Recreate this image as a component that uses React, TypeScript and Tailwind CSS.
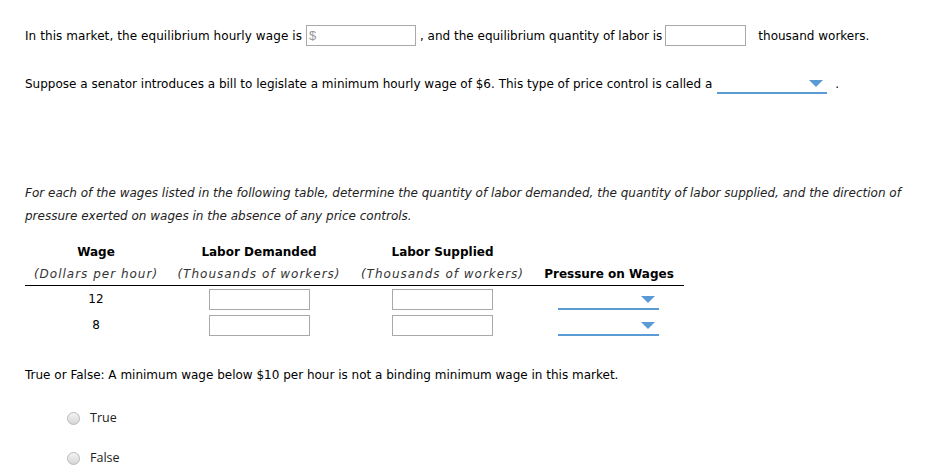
import React from 'react';

const font = { fontFamily: 'Verdana, "DejaVu Sans", sans-serif' };

function TextBox({ w = 'w-[101px]', prefix }: { w?: string; prefix?: string }) {
    return (
        <span className={`inline-flex items-center ${w} h-[21px] border border-[#a9a9a9] bg-white px-[2px] align-middle`}>
            {prefix && <span className="text-[#999] text-[13px] font-['Liberation_Sans',sans-serif]">{prefix}</span>}
        </span>
    );
}

function Dropdown({ w = 'w-[110px]' }: { w?: string }) {
    return (
        <span className={`relative inline-block ${w} h-[21px] border-b-2 border-[#5b9bd5] align-middle`}>
            <span className="absolute right-[4px] top-[7px] w-0 h-0 border-l-[7px] border-r-[7px] border-t-[7px] border-l-transparent border-r-transparent border-t-[#5b9bd5]" />
        </span>
    );
}

function Radio({ label }: { label: string }) {
    return (
        <div className="flex items-center h-[20px] pl-[42px]">
            <span className="w-[13px] h-[13px] rounded-full border border-[#b8b8b8] bg-gradient-to-b from-[#f4f4f4] to-[#d6d6d6]" />
            <span className="ml-[10px] text-[12.5px] text-[#222] font-['Open_Sans',sans-serif]">{label}</span>
        </div>
    );
}

export default function App() {
    const cols = 'grid grid-cols-[142px_184px_183px_150px] w-[659px]';
    const sub = 'h-[22px] leading-[22px] italic text-[#333] tracking-[1px]';
    return (
        <div style={font} className="w-[928px] h-[468px] bg-white text-black text-[12px] pl-[25px] pr-[20px] overflow-hidden">
            <div className="flex items-center h-[21px] mt-[25px] whitespace-nowrap">
                <span className="tracking-[0.08px]">In this market, the equilibrium hourly wage is</span>
                <span className="ml-[4px]"><TextBox w="w-[110px]" prefix="$" /></span>
                <span className="ml-[4px]">, and the equilibrium quantity of labor is</span>
                <span className="ml-[3px]"><TextBox w="w-[81px]" /></span>
                <span className="ml-[12px]">thousand workers.</span>
            </div>

            <div className="flex items-center h-[21px] mt-[27px] whitespace-nowrap">
                <span>Suppose a senator introduces a bill to legislate a minimum hourly wage of $6. This type of price control is called a</span>
                <span className="ml-[5px]"><Dropdown /></span>
                <span className="ml-[8px]">.</span>
            </div>

            <p className="italic leading-[23px] mt-[88px] text-[#222]">
                For each of the wages listed in the following table, determine the quantity of labor demanded, the quantity of labor supplied, and the direction of pressure exerted on wages in the absence of any price controls.
            </p>

            <div className="mt-[13px]">
                <div className={`${cols} text-center border-b border-black`}>
                    <div className="h-[22px] leading-[22px] font-bold">Wage</div>
                    <div className="h-[22px] leading-[22px] font-bold">Labor Demanded</div>
                    <div className="h-[22px] leading-[22px] font-bold">Labor Supplied</div>
                    <div className="h-[22px]" />
                    <div className={sub}>(Dollars per hour)</div>
                    <div className={sub}>(Thousands of workers)</div>
                    <div className={sub}>(Thousands of workers)</div>
                    <div className="h-[22px] leading-[22px] font-bold">Pressure on Wages</div>
                </div>
                {[12, 8].map((wage) => (
                    <div key={wage} className={`${cols} h-[26px] items-center text-center`}>
                        <div>{wage}</div>
                        <div className="flex justify-center"><TextBox /></div>
                        <div className="flex justify-center"><TextBox /></div>
                        <div className="flex justify-center pr-[2px]"><Dropdown w="w-[101px]" /></div>
                    </div>
                ))}
            </div>

            <div className="flex items-center h-[20px] mt-[27px]">
                True or False: A minimum wage below $10 per hour is not a binding minimum wage in this market.
            </div>

            <div className="mt-[23px] flex flex-col gap-[20px]">
                <Radio label="True" />
                <Radio label="False" />
            </div>
        </div>
    );
}
